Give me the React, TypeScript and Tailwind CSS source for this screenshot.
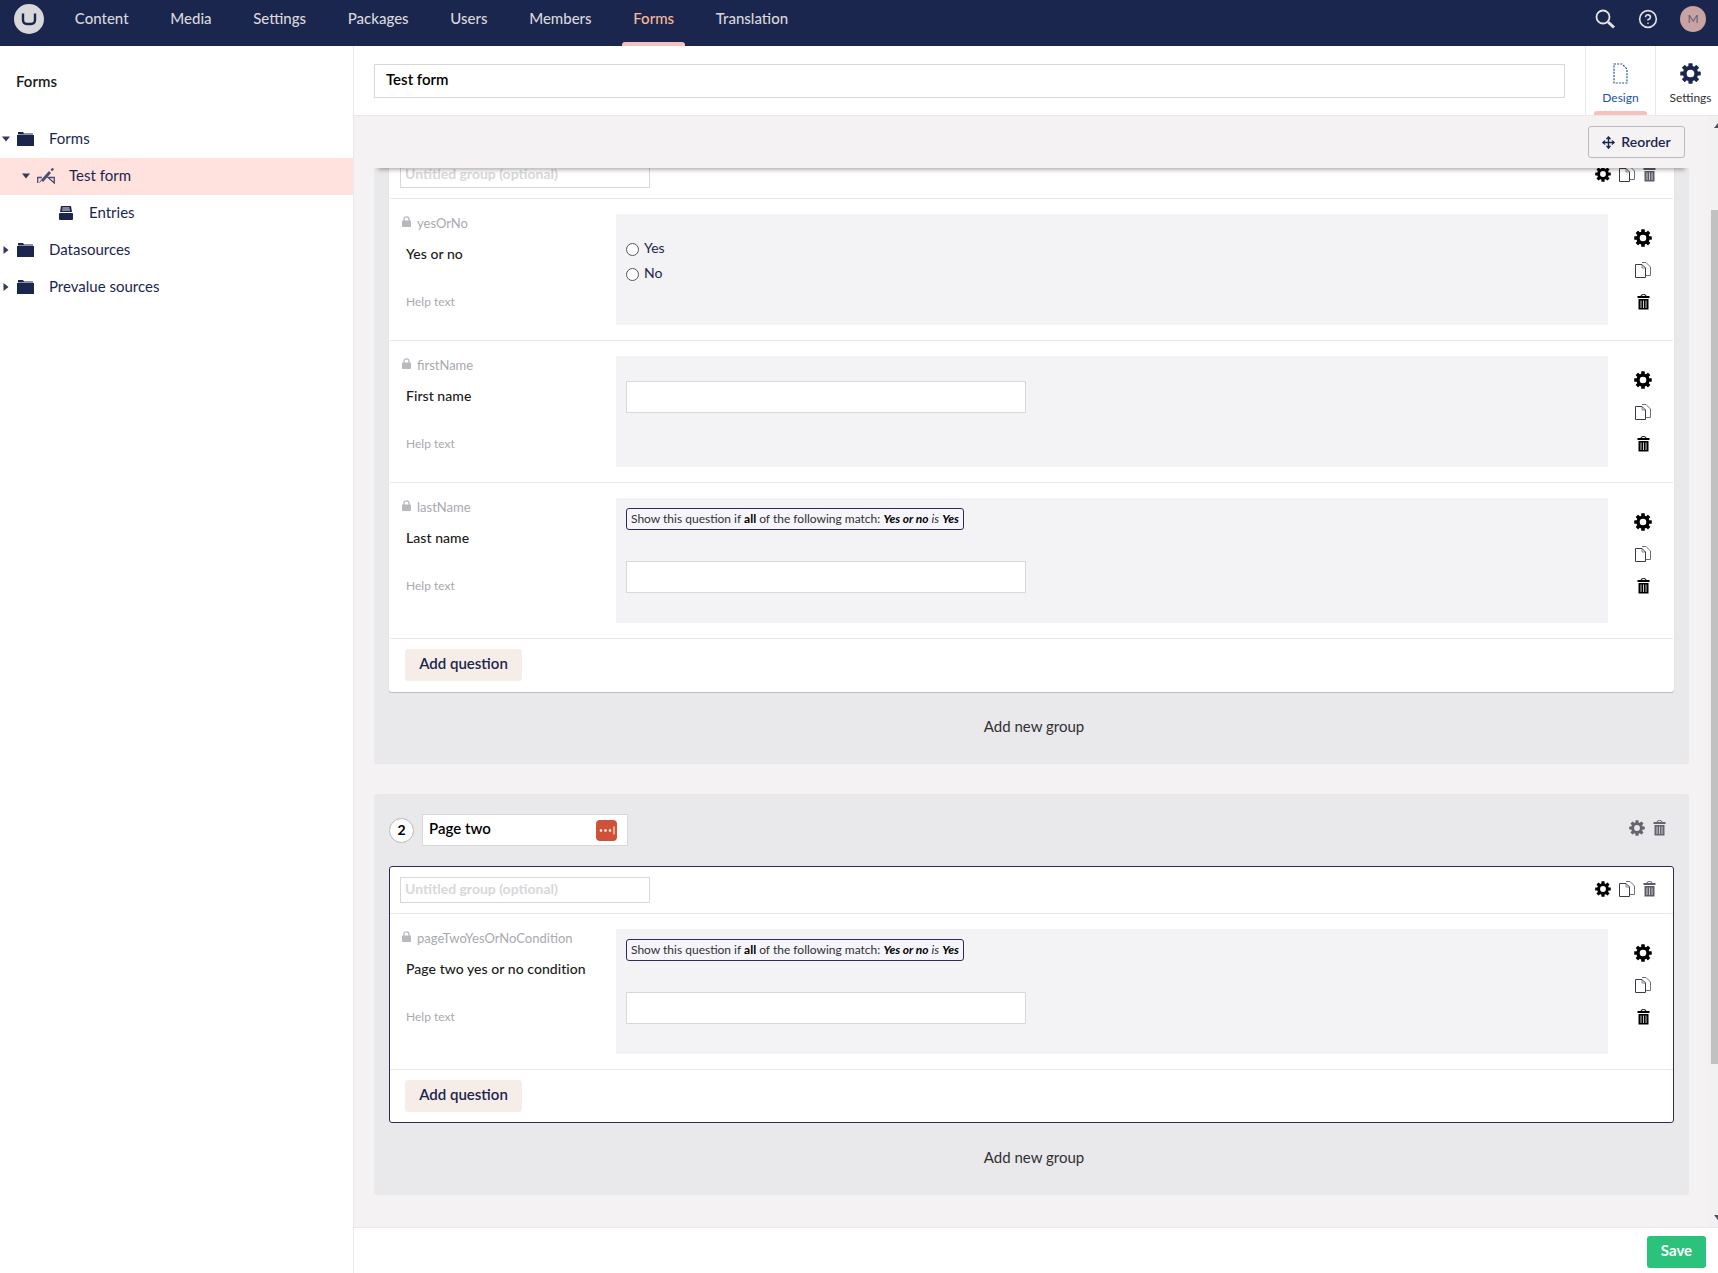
import { useState, type ReactNode } from "react"
import { CircleHelp, Move } from "lucide-react"

const navItems = ["Content", "Media", "Settings", "Packages", "Users", "Members", "Forms", "Translation"]

// icons
function Gear({ className }: { className?: string }) {
  return (
    <svg viewBox="0 0 24 24" className={className} fill="currentColor">
      {[0, 45, 90, 135, 180, 225, 270, 315].map((a) => (
        <rect key={a} x="9.6" y="0.3" width="4.8" height="6" rx="0.8" transform={`rotate(${a} 12 12)`} />
      ))}
      <circle cx="12" cy="12" r="6.6" fill="none" stroke="currentColor" strokeWidth="4.4" />
    </svg>
  )
}

function CopyIcon() {
  return (
    <svg viewBox="0 0 16 17" className="h-[17px] w-[16px]" fill="none" strokeWidth="1">
      <path d="M7 1.5 H11 L15.5 6 V14.5 H11" stroke="#70707a" />
      <path d="M0.5 3.5 H7 L10.5 7 V16.5 H0.5 Z" fill="#fff" stroke="#3c3c44" />
      <path d="M7 3.5 V7 H10.5" stroke="#3c3c44" strokeWidth="0.6" />
    </svg>
  )
}

function Trash({ color = "#000" }: { color?: string }) {
  return (
    <svg viewBox="0 0 13 16" className="h-[16px] w-[13px]">
      <path d="M4 2 Q4 0.5 6.5 0.5 Q9 0.5 9 2" fill="none" stroke={color} strokeWidth="1" />
      <rect x="0.5" y="2" width="12" height="2" fill={color} />
      <path d="M1.5 5 H11.5 V15.5 H1.5 Z" fill={color} />
      <path d="M4 6.5 V14 M6.5 6.5 V14 M9 6.5 V14" stroke="#c9c9cf" strokeWidth="1" />
    </svg>
  )
}

function Folder() {
  return (
    <svg viewBox="0 0 17 14" className="h-[14px] w-[17px]" fill="#1b264f">
      <path d="M1 0 H6 L7 1.5 H16 V2.5 H1 Z" />
      <rect x="0" y="3" width="17" height="11" />
    </svg>
  )
}

function Caret({ open }: { open: boolean }) {
  return (
    <svg viewBox="0 0 8 8" className="h-[8px] w-[8px]" fill="#303a5e">
      {open ? <path d="M0 1.5 H8 L4 6.5 Z" /> : <path d="M1.5 0 V8 L6.5 4 Z" />}
    </svg>
  )
}

function Lock() {
  return (
    <svg viewBox="0 0 9 11" className="h-[11px] w-[9px] shrink-0" fill="#b8b8be">
      <path d="M2 5 V3.2 Q2 0.8 4.5 0.8 Q7 0.8 7 3.2 V5" fill="none" stroke="#b8b8be" strokeWidth="1.3" />
      <rect x="0" y="4.6" width="9" height="6.4" rx="0.8" />
    </svg>
  )
}

function Row({ alias, label, height, children }: { alias: string; label: string; height: string; children: ReactNode }) {
  return (
    <div className="flex border-b border-[#e9e9eb] py-[15px]">
      <div className="w-[226px] shrink-0 pl-[12px]">
        <div className="flex h-[18px] items-center gap-[6px] pt-[2px] text-[13px] text-[#a9a9af]">
          <span className="-mt-[5px]">
            <Lock />
          </span>
          {alias}
        </div>
        <div className="mt-[12px] pl-[4px] text-[14px] leading-[20px] font-medium tracking-[0.05px] text-[#1a1a20]">{label}</div>
        <div className="mt-[30px] pl-[4px] text-[12px] leading-[16px] text-[#a9a9af]">Help text</div>
      </div>
      <div className={`w-[992px] shrink-0 bg-[#f3f3f5] pl-[10px] ${height}`}>{children}</div>
      <div className="flex flex-1 flex-col items-center gap-[14px] pt-[15px] pl-[5px]">
        <Gear className="h-[18px] w-[18px] text-black" />
        <CopyIcon />
        <span className="mt-[2px]">
          <Trash />
        </span>
      </div>
    </div>
  )
}

function TextField() {
  return <div className="h-[32px] w-[400px] border border-[#d8d7d9] bg-white" />
}

function Condition() {
  return (
    <div className="flex h-[22px] w-[338px] items-center whitespace-nowrap rounded-[3px] border border-[#2f2a5c] bg-[#f6f5fb] pl-[4px] text-[12px] text-[#303033]">
      Show this question if&nbsp;<b className="font-bold text-black">all</b>&nbsp;of the following match:&nbsp;
      <b className="font-bold text-black italic">Yes or no</b>&nbsp;<i>is</i>&nbsp;
      <b className="font-bold text-black italic">Yes</b>
    </div>
  )
}

function ConditionalField() {
  return (
    <>
      <div className="pt-[10px]">
        <Condition />
      </div>
      <div className="pt-[31px]">
        <TextField />
      </div>
    </>
  )
}

function RadioOption({ text }: { text: string }) {
  return (
    <label className="flex h-[25px] items-center gap-[5px]">
      <input type="radio" name="yesno" className="h-[13px] w-[13px] appearance-none rounded-full border border-[#55555f] bg-white" />
      <span className="-mt-[4px]">{text}</span>
    </label>
  )
}

function GroupCard({ active, children }: { active?: boolean; children: ReactNode }) {
  return (
    <div
      className={`rounded-[3px] border bg-white ${
        active ? "border-[#2f2a5c]" : "border-transparent shadow-[0_1px_1px_rgba(0,0,0,0.2)]"
      }`}
    >
      <div className="flex h-[47px] items-center justify-between border-b border-[#e9e9eb] pr-[17px] pl-[10px]">
        <input
          readOnly
          placeholder="Untitled group (optional)"
          className="h-[26px] w-[250px] border border-[#d8d7d9] bg-white px-[4px] pb-[3px] text-[14px] font-bold placeholder:text-[#d8d7d9]"
        />
        <div className="flex items-center gap-[8px] pb-[3px]">
          <Gear className="h-[16px] w-[16px] text-black" />
          <CopyIcon />
          <Trash color="#5c5c66" />
        </div>
      </div>
      {children}
      <div className="p-[10px] pl-[15px]">
        <button className="h-[32px] w-[117px] rounded-[3px] bg-[#f6ede8] pb-[3px] text-[15px] font-semibold text-[#1b264f]">
          Add question
        </button>
      </div>
    </div>
  )
}

function PageHeader({ index, name }: { index: number; name: string }) {
  return (
    <div className="flex h-[72px] items-start">
      <div className="mt-[24px] flex h-[25px] w-[25px] items-center justify-center rounded-full border border-[#bbbabf] bg-white pb-[2px] text-[14px] font-bold text-black">
        {index}
      </div>
      <div className="mt-[20px] ml-[8px] flex h-[32px] w-[206px] items-center justify-between border border-[#d8d7d9] bg-white pr-[10px] pl-[6px]">
        <span className="pb-[3px] text-[15px] font-semibold text-black">{name}</span>
        <svg viewBox="0 0 21 21" className="h-[21px] w-[21px]">
          <rect width="21" height="21" rx="4" fill="#cf5138" />
          <circle cx="5" cy="10.5" r="1.3" fill="#fff" />
          <circle cx="9.5" cy="10.5" r="1.3" fill="#fff" />
          <circle cx="14" cy="10.5" r="1.3" fill="#fff" />
          <path d="M18 6.5 V14.5" stroke="#fff" strokeWidth="1" />
        </svg>
      </div>
      <div className="mt-[26px] ml-auto flex items-center gap-[8px] pr-[8px] text-[#65656f]">
        <Gear className="h-[16px] w-[16px]" />
        <Trash color="#65656f" />
      </div>
    </div>
  )
}

function PageBlock({ header, children }: { header?: ReactNode; children: ReactNode }) {
  return (
    <div className="rounded-[3px] bg-[#e9e9eb] px-[15px]">
      {header}
      {children}
      <div className="flex h-[72px] items-center justify-center pb-[4px] pl-[5px] text-[15px] text-[#303033]">Add new group</div>
    </div>
  )
}

export default function App() {
  const [activeTab] = useState("Design")

  return (
    <div className="flex h-screen w-full flex-col overflow-hidden bg-white font-['Lato','Liberation_Sans',sans-serif] text-[#1b264f]">
      {/* top bar */}
      <header className="flex h-[46px] shrink-0 items-center bg-[#1b264f] pr-[12px] pl-[14px]">
        <div className="mb-[8px] flex h-[30px] w-[30px] items-center justify-center rounded-full bg-[#d8d7d9]">
          <svg viewBox="0 0 16 16" className="h-[16px] w-[16px]" fill="none" stroke="#1b264f" strokeWidth="2.4">
            <path d="M2 2.5 V9 Q2 13 6 13 H10 Q14 13 14 9 V2.5" />
          </svg>
        </div>
        <nav className="ml-[10px] flex h-full">
          {navItems.map((item) => (
            <div
              key={item}
              className={`relative flex h-full items-center px-[20.85px] pb-[10px] text-[15px] font-medium ${
                item === "Forms" ? "text-[#f5b99a]" : "text-[#d8d7d9]"
              }`}
            >
              {item}
              {item === "Forms" && (
                <span className="absolute right-[10px] bottom-0 left-[10px] h-[4px] rounded-t-[3px] bg-[#f5c1bc]" />
              )}
            </div>
          ))}
        </nav>
        <div className="mb-[8px] ml-auto flex items-center">
          <svg viewBox="0 0 20 20" className="h-[20px] w-[20px]" fill="none" stroke="#e4e4e4">
            <circle cx="8" cy="8" r="6.5" strokeWidth="1.8" />
            <path d="M13 13 L19 18.5" strokeWidth="3" />
          </svg>
          <CircleHelp className="ml-[23px] h-[20px] w-[20px] text-[#e4e4e4]" strokeWidth={1.9} />
          <div className="ml-[22px] flex h-[26px] w-[26px] items-center justify-center rounded-full bg-[#c9a3a1] text-[12px] text-[#5c5c70]">
            M
          </div>
        </div>
      </header>

      <div className="flex min-h-0 flex-1">
        {/* sidebar */}
        <aside className="w-[354px] shrink-0 border-r border-[#e9e9eb]">
          <div className="h-[75px] pt-[25px] pl-[16px] text-[15px] leading-[20px] font-semibold text-[#1a1a20]">Forms</div>
          <div className="text-[15px]">
            <div className="flex h-[37px] items-center pb-[2px] pl-[2px]">
              <Caret open />
              <span className="ml-[7px]">
                <Folder />
              </span>
              <span className="ml-[15px]">Forms</span>
            </div>
            <div className="flex h-[37px] items-center bg-[#ffe1de] pb-[2px] pl-[22px]">
              <Caret open />
              <svg viewBox="0 0 18 17" className="ml-[7px] h-[17px] w-[18px]" fill="none" stroke="#474f72">
                <path d="M0.7 16 V10.5 H5 M11 10.5 H17.3 V16 Z" strokeWidth="1.3" />
                <path d="M5 14 L13 5" strokeWidth="2.8" />
                <path d="M14.3 3.6 L16.2 1.6" strokeWidth="2.2" />
                <path d="M2.5 15.5 L4.5 13" strokeWidth="1" />
              </svg>
              <span className="ml-[14px]">Test form</span>
            </div>
            <div className="flex h-[37px] items-center pb-[2px] pl-[59px]">
              <svg viewBox="0 0 14 14" className="h-[14px] w-[14px]" fill="#1b264f">
                <path d="M2 0 H12 L13 6 H1 Z" />
                <path d="M3.5 2 H10.5 M3 4 H11" stroke="#fff" strokeWidth="0.9" />
                <rect x="0" y="7" width="14" height="7" rx="1" />
              </svg>
              <span className="ml-[16px]">Entries</span>
            </div>
            <div className="flex h-[37px] items-center pb-[2px] pl-[2px]">
              <Caret open={false} />
              <span className="ml-[7px]">
                <Folder />
              </span>
              <span className="ml-[15px]">Datasources</span>
            </div>
            <div className="flex h-[37px] items-center pb-[2px] pl-[2px]">
              <Caret open={false} />
              <span className="ml-[7px]">
                <Folder />
              </span>
              <span className="ml-[15px]">Prevalue sources</span>
            </div>
          </div>
        </aside>

        <main className="flex min-w-0 flex-1 flex-col">
          {/* editor header */}
          <div className="flex h-[70px] shrink-0 border-b border-[#e9e9eb] pl-[20px]">
            <div className="flex-1 pt-[18px] pr-[20px]">
              <input
                readOnly
                defaultValue="Test form"
                className="h-[34px] w-full border border-[#d8d7d9] pb-[4px] pl-[11px] text-[15px] font-semibold text-black"
              />
            </div>
            <div className="relative flex w-[70px] flex-col items-center border-l border-[#e9e9eb] pt-[17px] text-[#2152a3]">
              <svg viewBox="0 0 15 21" className="h-[21px] w-[15px]" fill="none" stroke="#2152a3" strokeWidth="1.2" strokeDasharray="2 1.2">
                <path d="M1 1 H9 L14 6 V20 H1 Z" />
              </svg>
              <span className="mt-[6px] text-[12px] leading-[16px]">{activeTab}</span>
              <span className="absolute right-[8px] bottom-0 left-[8px] h-[4px] rounded-t-[3px] bg-[#f5c1bc]" />
            </div>
            <div className="flex w-[63px] flex-col items-center border-l border-[#e9e9eb] pt-[17px] pl-[7px] text-[#303033]">
              <Gear className="h-[21px] w-[21px] text-[#1b264f]" />
              <span className="mt-[6px] text-[12px] leading-[16px]">Settings</span>
            </div>
          </div>

          <div className="relative flex min-h-0 flex-1">
            {/* scroll area */}
            <div className="flex min-w-0 flex-1 flex-col bg-[#f4f2f3] pr-[19px] pl-[20px]">
              <div className="relative z-10 flex h-[52px] shrink-0 items-start justify-end bg-[#f4f2f3] pt-[10px] pr-[4px] shadow-[0_6px_4px_-4px_rgba(0,0,0,0.3)]">
                <button className="flex h-[32px] w-[97px] items-center justify-center gap-[6px] rounded-[3px] border border-[#bbbabf] text-[14px] font-semibold text-[#1b264f]">
                  <Move className="h-[13px] w-[13px]" strokeWidth={2.6} />
                  <span className="pb-[2px]">Reorder</span>
                </button>
              </div>
              <div className="min-h-0 flex-1 overflow-hidden">
                <div className="-mt-[17px] flex flex-col gap-[30px]">
                  <PageBlock>
                    <GroupCard>
                      <Row alias="yesOrNo" label="Yes or no" height="h-[111px]">
                        <div className="pt-[23px] text-[14px] text-[#1b264f]">
                          <RadioOption text="Yes" />
                          <RadioOption text="No" />
                        </div>
                      </Row>
                      <Row alias="firstName" label="First name" height="h-[111px]">
                        <div className="pt-[25px]">
                          <TextField />
                        </div>
                      </Row>
                      <Row alias="lastName" label="Last name" height="h-[125px]">
                        <ConditionalField />
                      </Row>
                    </GroupCard>
                  </PageBlock>

                  <PageBlock header={<PageHeader index={2} name="Page two" />}>
                    <GroupCard active>
                      <Row alias="pageTwoYesOrNoCondition" label="Page two yes or no condition" height="h-[125px]">
                        <ConditionalField />
                      </Row>
                    </GroupCard>
                  </PageBlock>
                </div>
              </div>
            </div>

            {/* scrollbar */}
            <div className="relative w-[10px] shrink-0 bg-[#f1f1f1] pt-[94px] pl-[3px]">
              <div className="h-[854px] w-[7px] bg-[#c1c1c1]" />
              <svg viewBox="0 0 8 5" className="absolute top-[7px] left-[6px] h-[5px] w-[8px]" fill="#505058">
                <path d="M4 0 L8 5 H0 Z" />
              </svg>
              <svg viewBox="0 0 8 5" className="absolute bottom-[7px] left-[6px] h-[5px] w-[8px]" fill="#505058">
                <path d="M0 0 H8 L4 5 Z" />
              </svg>
            </div>
          </div>

          {/* footer */}
          <div className="flex h-[46px] shrink-0 items-start justify-end border-t border-[#e9e9eb] bg-white pt-[8px] pr-[12px]">
            <button className="h-[32px] w-[59px] rounded-[3px] bg-[#2bc37c] pb-[3px] text-[15px] font-bold text-white">Save</button>
          </div>
        </main>
      </div>
    </div>
  )
}
